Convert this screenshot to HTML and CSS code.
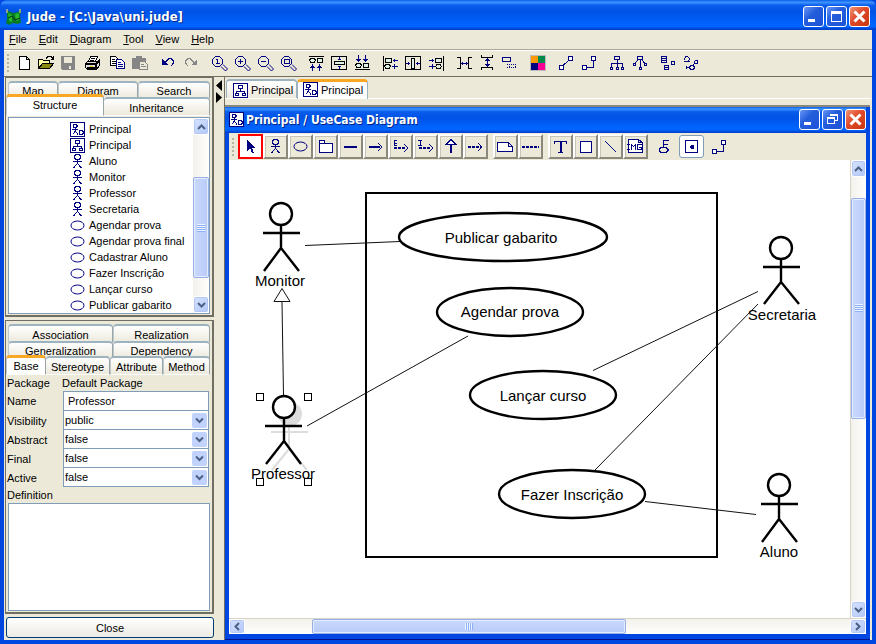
FILE: index.html
```html
<!DOCTYPE html>
<html lang="pt">
<head>
<meta charset="utf-8">
<title>Jude - [C:\Java\uni.jude]</title>
<link rel="stylesheet" href="styles.css">
</head>
<body>
<svg class="defs" aria-hidden="true">
  <symbol id="usecase-diagram" viewBox="0 0 15 15"><path class="fw" d="M.5.5h14v14H.5z"/><path d="M4 2.500h2l1 1v1l-1 1H4l-1-1v-1zM2 7.500h6M5.500 6v3M5.500 9l-3 3.500M5.500 9l2.500 3.500M10 8.500h2l1 1v2l-1 1h-2l-1-1v-2z"/></symbol>
  <symbol id="class-diagram" viewBox="0 0 15 15"><path class="fw" d="M.5.5h14v14H.5z"/><path d="M5.500 2.500h4v3h-4zM7.500 6v2M3.500 10V8.500h8V10M2.500 10.500h3v2h-3zM9.500 10.500h3v2h-3z"/></symbol>
  <symbol id="actor" viewBox="0 0 13 15"><path d="M5 .5h3l1.500 1.500v2L8 5.500H5L3.500 4V2zM2 7.500h9M6.500 6v4M6.500 9.500l-4 4.500M6.500 9.500l4 4.500"/></symbol>
  <symbol id="oval" viewBox="0 0 15 11"><ellipse class="smooth" cx="7.500" cy="5.500" rx="6.500" ry="4.500"/></symbol>
  <symbol id="up" viewBox="0 0 9 6"><path class="chev" d="M1 5l3.500-3.500L8 5"/></symbol>
  <symbol id="down" viewBox="0 0 9 6"><path class="chev" d="M1 1l3.500 3.500L8 1"/></symbol>
  <symbol id="left" viewBox="0 0 6 9"><path class="chev" d="M5 1L1.500 4.500 5 8"/></symbol>
  <symbol id="right" viewBox="0 0 6 9"><path class="chev" d="M1 1l3.500 3.500L1 8"/></symbol>
  <symbol id="lens" viewBox="0 0 17 17"><path d="M4.500 1.500h4l3 3v4l-3 3h-4l-3-3v-4z"/><path class="smooth" d="M10 11.500l4.500 4.500 2-2L12 9.500"/></symbol>
  <symbol id="close" viewBox="0 0 21 21"><path class="cap" d="M5.500 5.500l10 10M15.500 5.500l-10 10"/></symbol>
  <symbol id="min" viewBox="0 0 21 21"><path class="capf" d="M5 13h7v3H5z"/></symbol>
</svg>
<header class="titlebar">
  <svg class="logo" viewBox="0 0 16 16"><path d="M1 1l3 2 4 1 4-1 2-2 1 1-1 4 1 8-4 1-4-1-4 2-3-2 1-4z" fill="#087b24"/><path d="M2 4l4 2v7l-3-1zM9 5l4-1v7l-3 1z" fill="#25b72e"/><path d="M1 0v4M14 0v4" stroke="#ffe680"/><path d="M2 9l4-2 3 4 5-2" stroke="#052d12" fill="none"/></svg>
  <h1>Jude - [C:\Java\uni.jude]</h1>
  <button class="cb" aria-label="Minimize"><svg><use href="#min"/></svg></button>
  <button class="cb" aria-label="Maximize"><svg viewBox="0 0 21 21"><path class="cap1" d="M5.500 6v9.500h10V6M5 6h11"/><path class="capf" d="M5 5h11v3H5z"/></svg></button>
  <button class="cb red" aria-label="Close window"><svg><use href="#close"/></svg></button>
</header>
<div class="frame">
  <nav class="menu"><button><u>F</u>ile</button><button><u>E</u>dit</button><button><u>D</u>iagram</button><button><u>T</u>ool</button><button><u>V</u>iew</button><button><u>H</u>elp</button></nav>
  <div class="toolbar">
    <i class="grip"></i>
    <div class="grp first">
      <button aria-label="New"><svg class="blk" viewBox="0 0 17 17"><path class="fw" d="M4.500 1.500h7l3 3v9.500h-10zM11.500 1.500v3h3"/></svg></button>
      <button aria-label="Open"><svg class="blk" viewBox="0 0 17 17"><path fill="#ff9" d="M.5 13.500v-9h4l1 1h6v3"/><path fill="#8a8a10" d="M.5 13.500l4-5h11l-4 5z"/><path d="M8 3.500l2-2h3l2 2M15.500 1v3h-3"/></svg></button>
      <button aria-label="Save"><svg viewBox="0 0 17 17"><path class="n" fill="#868686" d="M0 1h14v14H1l-1-1z"/><path class="n" fill="#ece9d8" d="M3 2h8v6H3zM8 11h2v3H8z"/></svg></button>
      <button aria-label="Print"><svg class="blk" viewBox="0 0 17 17"><path class="fw" d="M4.500 6.500l2-5h7l-2 5z"/><path d="M7 3.500h4M6 5.500h4"/><path fill="#ddd" d="M1.500 8.500l2-2h10l2-2v6l-3 4h-9l-2-2z"/><path stroke-width="2" d="M2 9h10l3-3M3 13h9M12 9v5"/><path stroke="#dc0" d="M6 11.500h3"/></svg></button>
    </div>
    <div class="grp near">
      <button aria-label="Copy"><svg class="blk" viewBox="0 0 17 17"><path class="fw" d="M1.500 1.500h5l3 3v6h-8zM3 4.500h3M3 6.500h4M3 8.500h4"/><path class="fw" stroke="#000080" d="M7.500 4.500h5l3 3v6h-8zM9 7.500h3M9 9.500h5M9 11.500h5"/></svg></button>
      <button aria-label="Paste"><svg viewBox="0 0 17 17"><path class="n" fill="#868686" d="M0 3h4V1h6v2h4v11H0z"/><path fill="#ece9d8" stroke="#868686" d="M7.500 6.500h5l3 3v5h-8zM9 9.500h3M9 11.500h5M4 4.500h6"/></svg></button>
    </div>
    <div class="grp">
      <button aria-label="Undo"><svg viewBox="0 0 17 17"><path d="M5 7.500l4-4h2l2.500 2.500v2L11 11"/><path class="f" d="M2 4l6 6H2z"/></svg></button>
      <button aria-label="Redo"><svg class="gry" viewBox="0 0 17 17"><path d="M11 7.500l-4-4H5L2.500 6v2L5 11"/><path class="n" fill="#868686" d="M14 4l-6 6h6z"/></svg></button>
    </div>
    <div class="grp">
      <button aria-label="Zoom 100%"><svg viewBox="0 0 17 17"><use href="#lens"/><path d="M5 4.500h1.500V9M5 8.500h4"/></svg></button>
      <button aria-label="Zoom in"><svg viewBox="0 0 17 17"><use href="#lens"/><path d="M4 6.500h5M6.500 4v5"/></svg></button>
      <button aria-label="Zoom out"><svg viewBox="0 0 17 17"><use href="#lens"/><path d="M4 6.500h5"/></svg></button>
      <button aria-label="Zoom fit"><svg viewBox="0 0 17 17"><use href="#lens"/><path d="M4.500 4.500h5v4h-5z"/></svg></button>
    </div>
    <div class="grp">
      <button aria-label="Align top"><svg class="blk" viewBox="0 0 17 17"><path d="M1 1.500h15"/><path class="fg" d="M3 3.500h3L7.500 5 6 7.500H3L1.500 5zM9.500 3.500h5v4h-5z"/><path class="b" d="M4.500 9v7M2 12.500h5M3 11.500h3M11.500 9v7M9 12.500h5M10 11.500h3"/></svg></button>
      <button aria-label="Align middle"><svg class="blk" viewBox="0 0 17 17"><path d="M.5 1.500h15v13H.5z"/><path class="fg" d="M3.500 6.500h10v3h-10z"/><path class="b" d="M8.500 2v3M7 4.500h3M8.500 11v3M7 11.500h3"/></svg></button>
      <button aria-label="Align bottom"><svg class="blk" viewBox="0 0 17 17"><path d="M1 14.500h15"/><path class="fg" d="M3 8.500h3L7.500 10 6 12.500H3L1.500 10zM9.500 8.500h5v4h-5z"/><path class="b" d="M4.500 0v7M2 4.500h5M3 5.500h3M11.500 0v7M9 4.500h5M10 5.500h3"/></svg></button>
    </div>
    <div class="grp">
      <button aria-label="Align left"><svg class="blk" viewBox="0 0 17 17"><path d="M1.500 1v15"/><path class="fg" d="M3.500 3.500h6v4h-6zM4 9.500h3L8.500 11 7 13.500H4L2.500 11z"/><path class="b" d="M11 5.500h5M12.500 4v3M10 11.500h6M12.500 9v5"/></svg></button>
      <button aria-label="Align center"><svg class="blk" viewBox="0 0 17 17"><path d="M.5 1.500h15v13H.5z"/><path class="fg" d="M6.500 3.500h3v10h-3z"/><path class="b" d="M1 8.500h4M3.500 7v3M11 8.500h4M12.500 7v3"/></svg></button>
      <button aria-label="Align right"><svg class="blk" viewBox="0 0 17 17"><path d="M15.500 1v15"/><path class="fg" d="M7.500 3.500h6v4h-6zM9 9.500h3l1.500 2-1.500 2H9l-1.500-2z"/><path class="b" d="M1 5.500h5M4.500 4v3M1 11.500h6M4.500 9v5"/></svg></button>
    </div>
    <div class="grp">
      <button aria-label="Same horizontal gap"><svg class="blk" viewBox="0 0 17 17"><path d="M1 2.500h3.500v11H1M16 2.500h-3.500v11H16"/><path class="b" d="M5 8.500h7M6.500 7v3M10.500 7v3"/></svg></button>
      <button aria-label="Same vertical gap"><svg class="blk" viewBox="0 0 17 17"><path d="M2.500 0v2.500h11V0M2.500 15v-2.500h11V15"/><path class="b" d="M8.500 3v9M6 5.500h5M7 4.500h3M6 9.500h5M7 10.500h3"/></svg></button>
      <button aria-label="Adjust size"><svg viewBox="0 0 17 17"><path d="M.5 2.500h8v4h-8z"/><path stroke-dasharray="1 1" d="M5 9.500h10M5 12.500h10M7.500 9v4M13.500 9v4"/></svg></button>
    </div>
    <div class="grp"><button aria-label="Color"><svg viewBox="0 0 17 17"><path class="n" fill="#bbb" d="M0 0h16v16H0z"/><path class="n" fill="#f90" d="M1 1h7v7H1z"/><path class="n" fill="#008a4a" d="M8 1h7v7H8z"/><path class="n" fill="#000080" d="M1 8h7v7H1z"/><path class="n" fill="#f09" d="M8 8h7v7H8z"/></svg></button></div>
    <div class="grp">
      <button aria-label="Straight line"><svg viewBox="0 0 17 17"><path class="fw" d="M10.500 1.500h4v4h-4zM1.500 10.500h4v4h-4z"/><path d="M5 10.500l5.500-5"/></svg></button>
      <button aria-label="Right angle line"><svg viewBox="0 0 17 17"><path class="fw" d="M10.500 1.500h4v4h-4zM1.500 10.500h4v4h-4z"/><path d="M12.500 6v6.500H6"/></svg></button>
    </div>
    <div class="grp">
      <button aria-label="Tree layout"><svg viewBox="0 0 17 17"><path d="M5.500 1.500h5v3h-5zM8.500 5v7M2.500 12V8.500h11V12M1.500 12.500h2v2h-2zM7.500 12.500h2v2h-2zM12.500 12.500h2v2h-2z"/></svg></button>
      <button aria-label="Radial layout"><svg viewBox="0 0 17 17"><path d="M5.500 1.500h5v3h-5zM8.500 5v7M7.500 12.500h2v2h-2zM3 8.500L6 5M13 8.500L10 5M1.500 8.500h2v2h-2zM12.500 8.500h2v2h-2z"/></svg></button>
    </div>
    <div class="grp">
      <button aria-label="Auto layout classes"><svg viewBox="0 0 17 17"><path d="M1.500 1.500h5v6h-5zM1.500 3.500h5M1.500 5.500h5M11.500 6.500h3v3h-3zM4.500 10.500h4v4h-4zM4.500 12.500h4"/></svg></button>
      <button aria-label="Auto layout use cases"><svg viewBox="0 0 17 17"><path d="M2.500 5.500l-1-1.500 1-2 2-.5 1.500 1.500v2l-1 1M1 6.500h6M12.500 5.500h2v3h-3v-2zM8 10.500h2l1.500 1.500v1L10 14.500H8L6.500 13v-1zM3 12.500h3M3.500 11v3M10 10l2-2"/></svg></button>
    </div>
  </div>
  <div class="work">
    <aside class="side">
      <section class="panel">
        <div class="tabs back"><button class="w50">Map</button><button class="w80">Diagram</button><button class="grow">Search</button></div>
        <div class="tabs"><button class="on w98">Structure</button><button class="grow">Inheritance</button></div>
        <div class="tree">
          <ul>
            <li><svg class="i15"><use href="#usecase-diagram"/></svg>Principal</li>
            <li><svg class="i15"><use href="#class-diagram"/></svg>Principal</li>
            <li><svg class="i13"><use href="#actor"/></svg>Aluno</li>
            <li><svg class="i13"><use href="#actor"/></svg>Monitor</li>
            <li><svg class="i13"><use href="#actor"/></svg>Professor</li>
            <li><svg class="i13"><use href="#actor"/></svg>Secretaria</li>
            <li><svg class="i11"><use href="#oval"/></svg>Agendar prova</li>
            <li><svg class="i11"><use href="#oval"/></svg>Agendar prova final</li>
            <li><svg class="i11"><use href="#oval"/></svg>Cadastrar Aluno</li>
            <li><svg class="i11"><use href="#oval"/></svg>Fazer Inscrição</li>
            <li><svg class="i11"><use href="#oval"/></svg>Lançar curso</li>
            <li><svg class="i11"><use href="#oval"/></svg>Publicar gabarito</li>
          </ul>
          <div class="sb v"><button aria-label="Scroll up"><svg class="cv"><use href="#up"/></svg></button><div class="track t-tree"><div class="thumb"></div></div><button aria-label="Scroll down"><svg class="cv"><use href="#down"/></svg></button></div>
        </div>
      </section>
      <section class="panel props">
        <div class="tabs mid"><button class="w105">Association</button><button class="grow">Realization</button></div>
        <div class="tabs back"><button class="w105">Generalization</button><button class="grow">Dependency</button></div>
        <div class="tabs low"><button class="on w40">Base</button><button class="w64">Stereotype</button><button class="w53">Attribute</button><button class="grow">Method</button></div>
        <form class="form">
          <span>Package</span><span class="def">Default Package</span>
          <label for="name">Name</label><input id="name" value="Professor">
          <label for="vis">Visibility</label><div class="sel"><select id="vis"><option>public</option></select><svg><use href="#down"/></svg></div>
          <label for="abs">Abstract</label><div class="sel"><select id="abs"><option>false</option></select><svg><use href="#down"/></svg></div>
          <label for="fin">Final</label><div class="sel"><select id="fin"><option>false</option></select><svg><use href="#down"/></svg></div>
          <label for="act">Active</label><div class="sel"><select id="act"><option>false</option></select><svg><use href="#down"/></svg></div>
        </form>
        <label class="deflab" for="defn">Definition</label>
        <textarea id="defn"></textarea>
      </section>
      <button class="closebtn">Close</button>
    </aside>
    <div class="split"><svg viewBox="0 0 8 24"><path d="M6 0v11L0 5.500zM0 12v11l6-5.500z"/></svg></div>
    <main class="main">
      <div class="doctabs"><button><svg class="i15"><use href="#class-diagram"/></svg>Principal</button><button class="on"><svg class="i15"><use href="#usecase-diagram"/></svg>Principal</button></div>
      <div class="mdi">
        <div class="mtitle"><svg class="i15"><use href="#usecase-diagram"/></svg><h2>Principal / UseCase Diagram</h2>
          <button class="cb" aria-label="Minimize diagram"><svg><use href="#min"/></svg></button>
          <button class="cb" aria-label="Restore diagram"><svg viewBox="0 0 21 21"><path class="cap1" d="M8.500 7V5.500h7v6H13M8 6.500h7M5.500 9.500h7v5h-7zM5 8.500h8"/></svg></button>
          <button class="cb red" aria-label="Close diagram"><svg><use href="#close"/></svg></button>
        </div>
        <div class="body">
          <div class="tools">
            <i class="grip"></i>
            <div class="tg">
              <button class="sel-tool" aria-label="Select"><svg viewBox="0 0 17 17"><path class="f" d="M5 2v11l3-3 2 5h2l-2-5h3z"/></svg></button>
              <button aria-label="Actor"><svg viewBox="0 0 17 17"><use href="#actor" x="2" y="1" width="13" height="15"/></svg></button>
              <button aria-label="Use case"><svg viewBox="0 0 17 17"><use href="#oval" x="1" y="3" width="15" height="11"/></svg></button>
              <button aria-label="Package"><svg viewBox="0 0 17 17"><path class="fw" d="M2.500 5.500h13v9h-13zM2.500 5.500v-3h5v3"/></svg></button>
              <button aria-label="Association"><svg viewBox="0 0 17 17"><path stroke-width="2" d="M2 9h13"/></svg></button>
              <button aria-label="Directed association"><svg viewBox="0 0 17 17"><path stroke-width="2" d="M2 9h11"/><path d="M11 5l4 4-4 4"/></svg></button>
              <button aria-label="Extend"><svg viewBox="0 0 17 17"><path d="M5 2.500H2.500v5H5M3 5.500h2"/><path stroke-width="2" stroke-dasharray="3 1" d="M2 10h11"/><path d="M12 6l4 4-4 4"/></svg></button>
              <button aria-label="Include"><svg viewBox="0 0 17 17"><path d="M1 2.500h4M3.500 3v5M1 7.500h4"/><path stroke-width="2" stroke-dasharray="3 1" d="M2 10h11"/><path d="M12 6l4 4-4 4"/></svg></button>
              <button aria-label="Generalization"><svg viewBox="0 0 17 17"><path class="fw" d="M4 6.500h10L9 1.500z"/><path stroke-width="2" d="M9 7v8"/></svg></button>
              <button aria-label="Dependency"><svg viewBox="0 0 17 17"><path stroke-width="2" stroke-dasharray="3 1" d="M1 9h13"/><path d="M11 5l4 4-4 4"/></svg></button>
            </div>
            <div class="tg">
              <button aria-label="Note"><svg viewBox="0 0 17 17"><path class="fw" d="M.5 4.500h11l4 4v5H.5zM11.500 4.500v4h4"/></svg></button>
              <button aria-label="Note anchor"><svg viewBox="0 0 17 17"><path stroke-width="2" stroke-dasharray="3 1" d="M0 9h17"/></svg></button>
            </div>
            <div class="tg">
              <button aria-label="Text"><svg viewBox="0 0 17 17"><path d="M2.500 6V3.500h12V6M6 14.500h5"/><path stroke-width="2" d="M9 3v12"/></svg></button>
              <button aria-label="Rectangle"><svg viewBox="0 0 17 17"><path class="fw" d="M3.500 3.500h11v11h-11z"/></svg></button>
              <button aria-label="Line"><svg viewBox="0 0 17 17"><path d="M3 3l11 11"/></svg></button>
              <button aria-label="Image"><svg viewBox="0 0 17 17"><path class="fw" d="M1.500 1.500h10l4 3v10h-14zM11.500 1.500v3h4"/><path d="M0 6.500h3M1.500 7v4M0 11.500h3M4.500 12V6.500l2 2 2-2V12M15 6.500h-4.500v5h4V9H12"/></svg></button>
            </div>
            <div class="tg flat">
              <button aria-label="Lock tool"><svg viewBox="0 0 17 17"><path d="M8.500 9V2.500h5M9 6.500h4M6 9.500h5l2 2v1l-2 2H6l-2-2v-1z"/></svg></button>
              <button class="lit" aria-label="Center drag"><svg viewBox="0 0 17 17"><path d="M2.500 2.500h12v12h-12z"/><path class="f" d="M7 8l1-1h2l1 1v2l-1 1H8l-1-1z"/></svg></button>
              <button aria-label="Right angle"><svg viewBox="0 0 17 17"><path class="fw" d="M10.500 2.500h4v4h-4zM1.500 11.500h4v4h-4z"/><path d="M12.500 7v6.500H6"/></svg></button>
            </div>
          </div>
          <div class="view">
            <svg class="canvas"><g transform="translate(-229 -160)">
              <path class="box" d="M366 193h351v364H366z"/>
              <path class="ln" d="M305 245.500l95-4M282 302l1.500 94M307 426l161-90M593 370.500l165-79M595 470l163-166M645 501.500l111 13"/>
              <path class="ln tri" d="M282 288.500l8 13h-16z"/>
              <g class="ov"><ellipse cx="503" cy="237" rx="104" ry="24"/><ellipse cx="510" cy="312" rx="73" ry="24"/><ellipse cx="543" cy="395" rx="73" ry="24"/><ellipse cx="572" cy="494" rx="73" ry="24"/></g>
              <g class="shadow"><circle cx="290" cy="414" r="11"/><path d="M271 432h37M289 425v24M289 449l-17 21M289 449l18 21"/></g>
              <g class="man"><circle cx="281" cy="214" r="11"/><path d="M263 233h37M281 225v23M281 248l-17 23M281 248l18 23"/></g>
              <g class="man"><circle cx="284" cy="407" r="11"/><path d="M265 426h37M284 418v23M284 441l-18 23M284 441l17 23"/></g>
              <g class="man"><circle cx="781" cy="248" r="11"/><path d="M763 267h37M781 259v23M781 282l-17 22M781 282l18 22"/></g>
              <g class="man"><circle cx="779" cy="485" r="11"/><path d="M761 504h37M779 496v23M779 519l-17 23M779 519l18 23"/></g>
              <path class="hd" d="M256.500 393.500h7v7h-7zM304.500 393.500h7v7h-7zM256.500 478.500h7v7h-7zM304.500 478.500h7v7h-7z"/>
              <g class="lab"><text x="501" y="243">Publicar gabarito</text><text x="510" y="317">Agendar prova</text><text x="543" y="401">Lançar curso</text><text x="572" y="500">Fazer Inscrição</text><text x="280" y="286">Monitor</text><text x="283" y="479">Professor</text><text x="782" y="320">Secretaria</text><text x="779" y="557">Aluno</text></g>
            </g></svg>
            <div class="sb v"><button aria-label="Scroll diagram up"><svg class="cv"><use href="#up"/></svg></button><div class="track t-v"><div class="thumb"></div></div><button aria-label="Scroll diagram down"><svg class="cv"><use href="#down"/></svg></button></div>
          </div>
          <div class="sb h"><button aria-label="Scroll diagram left"><svg class="ch"><use href="#left"/></svg></button><div class="track t-h"><div class="thumb"></div></div><button aria-label="Scroll diagram right"><svg class="ch"><use href="#right"/></svg></button></div>
        </div>
      </div>
    </main>
  </div>
</div>
</body>
</html>
```
FILE: styles.css
```css
*{box-sizing:border-box}
body{margin:0;height:100vh;display:flex;flex-direction:column;overflow:hidden;background:#0046e0;font:11px/14px "Liberation Sans",Arial,sans-serif;color:#000}
button,input,select,textarea{font:inherit;color:inherit;margin:0;padding:0;border:0;background:none;border-radius:0}
svg{display:block;flex:none;fill:none;stroke:#000080;shape-rendering:crispEdges}
.defs{position:absolute;width:0;height:0}
.fw{fill:#fff}
.fg{fill:#dff0e4}
.f{fill:#000080;stroke:none}
.n{stroke:none}
.b{stroke:#000080}
.blk{stroke:#000}
.gry{stroke:#868686}
.smooth{shape-rendering:auto}
.i15{width:15px;height:15px}
.i13{width:13px;height:15px}
.i11{width:15px;height:11px}
.chev{stroke:#4d6185;stroke-width:2;shape-rendering:auto}
.cap{stroke:#fff;stroke-width:3;shape-rendering:auto}
.cap1{stroke:#fff}
.capf{fill:#fff;stroke:none}

.titlebar,.mtitle{display:flex;align-items:center;background:linear-gradient(#0a5fe8,#3c94ff 8%,#0a5cec 18%,#0053e5 40%,#0061fb 75%,#06f 88%,#0046d5 96%,#003dc8)}
.titlebar{height:30px;padding:3px 6px 0;border-radius:7px 7px 0 0;gap:2px}
.logo{width:16px;height:16px;stroke:none;shape-rendering:auto}
h1,h2{margin:0;flex:1;font:bold 13px/18px "DejaVu Sans Condensed","DejaVu Sans",sans-serif;color:#fff;text-shadow:1px 1px #00268a;white-space:nowrap}
h1{padding-left:3px}
h2{font-size:12px}
.cb{width:21px;height:21px;border:1px solid #fff;border-radius:3px;background:linear-gradient(135deg,#6a97f7,#245edb 40%,#1d52d8)}
.cb svg{width:21px;height:21px;margin:-1px}
.cb.red{background:linear-gradient(135deg,#f09577,#e0492a 45%,#c8380f)}

.frame{flex:1;min-height:0;display:flex;flex-direction:column;margin:0 4px 4px;background:#ece9d8}
.menu{height:20px;padding:1px 0 0 5px;display:flex;gap:12px;align-items:flex-start;border-bottom:1px solid #aca899}
.menu button{height:16px}
.toolbar{height:27px;padding-bottom:1px;display:flex;align-items:center;border-top:1px solid #fff;border-bottom:1px solid #716f64}
.grip{width:2px;height:18px;margin-left:3px;background:repeating-linear-gradient(#b8b4a4 0 2px,transparent 2px 4px)}
.grp{display:flex;margin-left:5px}
.grp.first{margin-left:3px}
.grp.near{margin-left:2px}
.grp button{width:23px;height:23px;display:grid;place-items:center}
.grp svg{width:17px;height:17px}

.work{flex:1;min-height:0;display:flex}
.side{width:209px;margin-left:1px;display:flex;flex-direction:column;gap:3px;padding-bottom:2px}
.panel{border:1px solid #716f64;border-width:1px 2px 2px 1px;padding:3px 2px 1px 0;display:flex;flex-direction:column}
.props{flex:1;min-height:0;padding-bottom:0}
.tabs{display:flex;padding-left:2px;height:20px;align-items:flex-end;position:relative}
.tabs button{height:19px;border:1px solid #9db3c0;border-color:#9db3c0 #9aa5a8 #fff #bcc8cc;border-width:2px 1px 1px;border-radius:4px 4px 0 0;background:linear-gradient(#fff,#ece9dc);padding-top:1px;line-height:14px;white-space:nowrap}
.tabs.back{height:15px;align-items:flex-start}
.tabs.back button{height:18px;padding-bottom:0}
.tabs.mid{height:17px;align-items:flex-start}
.tabs.low{height:19px}
.tabs .on{height:22px;margin-left:-2px;border-top:3px solid #f9a825;border-bottom-color:#fff;background:#fff;padding:0 0 2px}
.tabs.low .on{height:20px;padding-bottom:1px}
.tabs .on+button{border-left-width:0}
.w50{width:50px}.w80{width:80px}.w98{width:98px}.w105{width:105px}.w40{width:40px}.w64{width:64px}.w53{width:53px}.grow{flex:1}
.tree{height:197px;margin:1px 0 0 2px;border:1px solid #7f9db9;background:#fff;display:flex}
ul{list-style:none;margin:0;padding:3px 0 0 61px;flex:1;overflow:hidden}
li{height:16px;display:flex;align-items:center;white-space:nowrap;gap:4px}
li .i13{margin:0 1px}
.sb{display:flex;background:linear-gradient(90deg,#f3f1ec,#fefefb);flex:none}
.v{flex-direction:column;width:16px}
.h{height:16px;border-top:1px solid #d8d5c8;background:linear-gradient(#f3f1ec,#fefefb)}
.sb button{width:16px;height:17px;display:grid;place-items:center;border:1px solid #fff;border-radius:3px;background:linear-gradient(135deg,#d6e2ff,#b2c8f8);box-shadow:inset 0 0 0 1px #b5c8f5}
.v button{width:100%}
.h button{height:15px}
.cv{width:9px;height:6px}
.ch{width:6px;height:9px}
.track{flex:1;min-width:0;min-height:0;display:grid}
.thumb{border:1px solid #98b0e8;border-radius:2px;box-shadow:inset 0 0 0 1px #e3ebff;background:repeating-linear-gradient(#eef4ff 0 1px,#8cb0f8 1px 2px) center/8px 8px no-repeat,linear-gradient(90deg,#cad8fd,#b8cbf8);grid-area:2/1}
.h .thumb{grid-area:1/2;background:repeating-linear-gradient(90deg,#eef4ff 0 1px,#8cb0f8 1px 2px) center/8px 7px no-repeat,linear-gradient(#cad8fd,#b8cbf8)}
.t-tree{grid-template-rows:26% 63% 11%}
.t-v{grid-template-rows:5% 52% 43%}
.t-h{grid-template-columns:11% 52% 37%}

.form{display:grid;grid-template-columns:56px 1fr;grid-template-rows:16px 20px repeat(4,19px);align-items:center;padding:0 1px 0 1px}
.form .def{margin-left:-1px}
.form input{height:20px;width:100%;border:1px solid #7f9db9;background:#fff;padding-left:4px;min-width:0}
.sel{display:grid;grid-template-columns:1fr 16px;height:19px;border:1px solid #7f9db9;border-top:0;background:#fff;align-items:center}
.sel select{appearance:none;grid-area:1/1/2/3;width:100%;height:18px;padding-left:1px}
.sel svg{grid-area:1/2;width:15px;height:15px;padding:4px 3px;border-radius:2px;background:#c1d3fc;pointer-events:none}
.deflab{padding:1px 0 0 1px;height:16px}
textarea{flex:1;min-height:0;margin:0 0 1px 2px;border:1px solid #7f9db9;background:#fff;resize:none}
.closebtn{height:21px;margin-left:1px;border:1px solid #003c74;border-radius:3px;background:linear-gradient(#fff,#ecebe5)}
.split{width:10px;padding:3px 0 0 2px;background:#ece9d8}
.split svg{width:8px;height:24px;fill:#000;stroke:none;shape-rendering:auto}

.main{flex:1;min-width:0;display:flex;flex-direction:column;border-left:1px solid #716f64;margin-right:1px}
.doctabs{height:22px;padding:2px 0 0 1px;display:flex;align-items:flex-end;border-bottom:1px solid #fff}
.doctabs button{display:flex;align-items:center;gap:3px;width:71px;height:19px;padding:1px 0 0 6px;border:1px solid #9db3c0;border-width:2px 1px 0;border-radius:4px 4px 0 0;background:linear-gradient(#fff,#ece9dc)}
.doctabs .on{height:20px;margin-bottom:-1px;border-top:3px solid #f9a825;background:#fff;padding:0 0 2px 5px}
.mdi{flex:1;min-height:0;display:flex;flex-direction:column;margin:6px 1px 0 0;border-top:2px solid #8a887a;background:#0046e0;border-bottom:1px solid #00138c}
.mtitle{height:26px;padding:0 0 1px 4px;margin-right:4px;gap:2px}
.body{flex:1;min-height:0;margin:0 4px 5px;display:flex;flex-direction:column;background:#fff}
.tools{height:27px;background:#ece9d8;display:flex;align-items:center;gap:5px}
.tools .grip{margin-right:-1px}
.tg{display:flex}
.tg button{width:25px;height:25px;display:grid;place-items:center;border:2px solid;border-color:#fff #8b887c #8b887c #fff;box-shadow:inset 1px 1px #c9c5b6}
.tg svg{width:17px;height:17px}
.tg .sel-tool{border-color:#f00;background:#fff;box-shadow:none}
.tg.flat{gap:3px;margin-left:-2px}
.tg.flat button{border-color:transparent;box-shadow:none}
.tg.flat .lit{height:23px;border:1px solid #7f9db9;border-radius:3px;background:#fff;align-self:center}
.view{flex:1;min-height:0;display:flex}
.canvas{flex:1;min-width:0;height:100%;shape-rendering:auto;overflow:hidden}
.view .sb{border-left:1px solid #d8d5c8}
.box{stroke:#000;stroke-width:2}
.ln{stroke:#111;stroke-width:1}
.tri{fill:#fff}
.ov{fill:#fff;stroke:#000;stroke-width:2.4}
.man{stroke:#000;stroke-width:2.4}
.man circle{fill:#fff}
.shadow{stroke:#ddd;stroke-width:2}
.shadow circle{fill:#ddd}
.hd{stroke:#000;shape-rendering:crispEdges}
.lab{fill:#000;stroke:none;font-size:15px;text-anchor:middle}
```
